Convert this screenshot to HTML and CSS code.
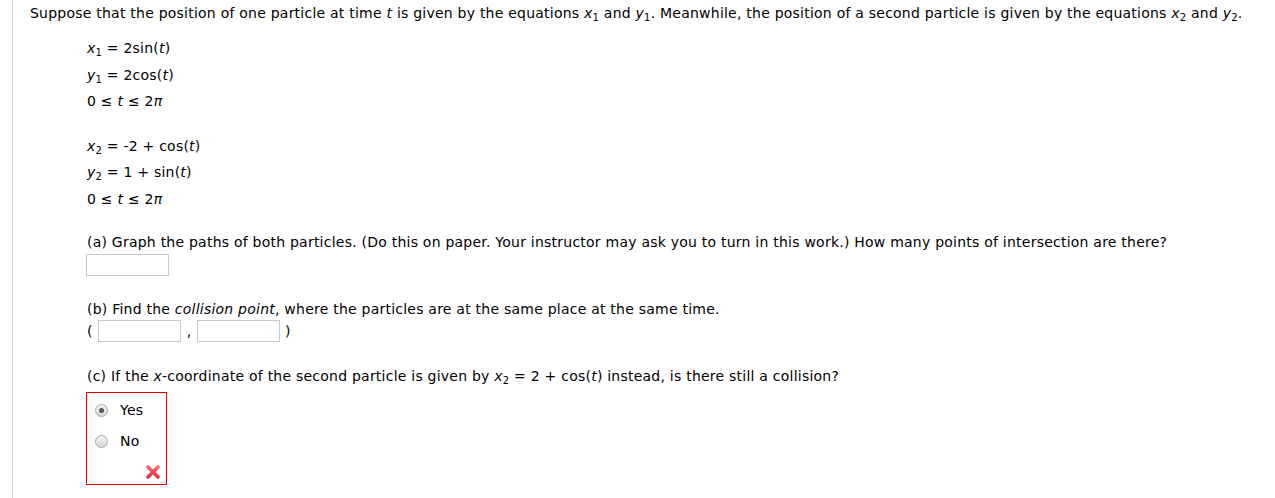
FILE: index.html
```html
<!DOCTYPE html>
<html>
<head>
<meta charset="utf-8">
<link rel="stylesheet" href="styles.css">
</head>
<body>
<div class="page">
  <p class="intro">Suppose that the position of one particle at time <i>t</i> is given by the equations <i>x</i><sub>1</sub> and <i>y</i><sub>1</sub>. Meanwhile, the position of a second particle is given by the equations <i>x</i><sub>2</sub> and <i>y</i><sub>2</sub>.</p>
  <div class="content">
    <div class="eqs first">
      <div><i>x</i><sub>1</sub> = 2sin(<i>t</i>)</div>
      <div><i>y</i><sub>1</sub> = 2cos(<i>t</i>)</div>
      <div>0 ≤ <i>t</i> ≤ 2<i>π</i></div>
    </div>
    <div class="eqs second">
      <div><i>x</i><sub>2</sub> = -2 + cos(<i>t</i>)</div>
      <div><i>y</i><sub>2</sub> = 1 + sin(<i>t</i>)</div>
      <div>0 ≤ <i>t</i> ≤ 2<i>π</i></div>
    </div>
    <p class="q qa">(a) Graph the paths of both particles. (Do this on paper. Your instructor may ask you to turn in this work.) How many points of intersection are there?</p>
    <div class="row"><input class="box" type="text"></div>
    <p class="q qb">(b) Find the <i>collision point</i>, where the particles are at the same place at the same time.</p>
    <div class="row pair"><span class="paren">(</span><input class="box" type="text"><span class="comma">,</span><input class="box" type="text"><span class="paren close">)</span></div>
    <p class="q qc">(c) If the <i>x</i>-coordinate of the second particle is given by <i>x</i><sub>2</sub> = 2 + cos(<i>t</i>) instead, is there still a collision?</p>
    <div class="choices">
      <label class="opt"><span class="radio checked"></span><span>Yes</span></label>
      <label class="opt"><span class="radio"></span><span>No</span></label>
      <div class="mark">
        <svg width="16" height="16" viewBox="0 0 16 16">
          <defs>
            <linearGradient id="g" x1="0" y1="0" x2="0" y2="1">
              <stop offset="0" stop-color="#ff6a73"/>
              <stop offset="1" stop-color="#e8303e"/>
            </linearGradient>
          </defs>
          <path d="M3 3 L13 13 M13 3 L3 13" stroke="url(#g)" stroke-width="3.6" stroke-linecap="round" fill="none"/>
        </svg>
      </div>
    </div>
  </div>
</div>
</body>
</html>
```

FILE: styles.css
```css
html, body {
  margin: 0;
  padding: 0;
  background: #fff;
}
body {
  font-family: "DejaVu Sans", Verdana, sans-serif;
  font-size: 14px;
  letter-spacing: 0.23px;
  color: #000;
}
.page {
  margin-left: 12px;
  border-left: 1px solid #d0d0d0;
  padding-left: 17px;
  min-height: 498px;
  box-sizing: border-box;
}
p { margin: 0; }
sub {
  font-size: 10px;
  vertical-align: -3px;
  line-height: 0;
}
i { font-style: italic; }
.intro {
  padding-top: 4px;
  line-height: 18px;
}
.content {
  margin-left: 56px;
}
.eqs {
  line-height: 26.5px;
  padding-left: 1px;
}
.eqs.first { margin-top: 13px; }
.eqs.second { margin-top: 18px; }
.q {
  line-height: 18px;
  padding-left: 1px;
}
.qa { margin-top: 21px; }
.qb { margin-top: 24px; }
.qc { margin-top: 25px; }
.row {
  display: flex;
  align-items: center;
  margin-top: 3px;
  height: 22px;
}
.box {
  width: 83px;
  height: 22px;
  box-sizing: border-box;
  border: 1px solid #c8c8c8;
  margin: 0;
  padding: 0;
  background: #fff;
  font: inherit;
}
.pair { margin-top: 2px; }
.paren {
  width: 12px;
  padding-left: 1px;
  box-sizing: border-box;
}
.comma {
  width: 16px;
  text-align: center;
}
.paren.close {
  padding-left: 5px;
}
.choices {
  margin-top: 7px;
  width: 81px;
  height: 93px;
  box-sizing: border-box;
  border: 1px solid #e00000;
  padding-top: 9px;
  display: flex;
  flex-direction: column;
}
.opt {
  display: flex;
  align-items: center;
  height: 16px;
  margin-bottom: 15px;
  padding-left: 8px;
}
.radio {
  width: 13px;
  height: 13px;
  box-sizing: border-box;
  border-radius: 50%;
  border: 1px solid #a9a9a9;
  background: linear-gradient(#f4f4f4, #d6d6d6);
  margin-right: 12px;
  position: relative;
}
.radio.checked::after {
  content: "";
  position: absolute;
  left: 3px;
  top: 3px;
  width: 5px;
  height: 5px;
  border-radius: 50%;
  background: #555;
}
.mark {
  display: flex;
  justify-content: flex-end;
  padding-right: 5px;
  margin-top: 0;
}
.mark svg { display: block; }
```
